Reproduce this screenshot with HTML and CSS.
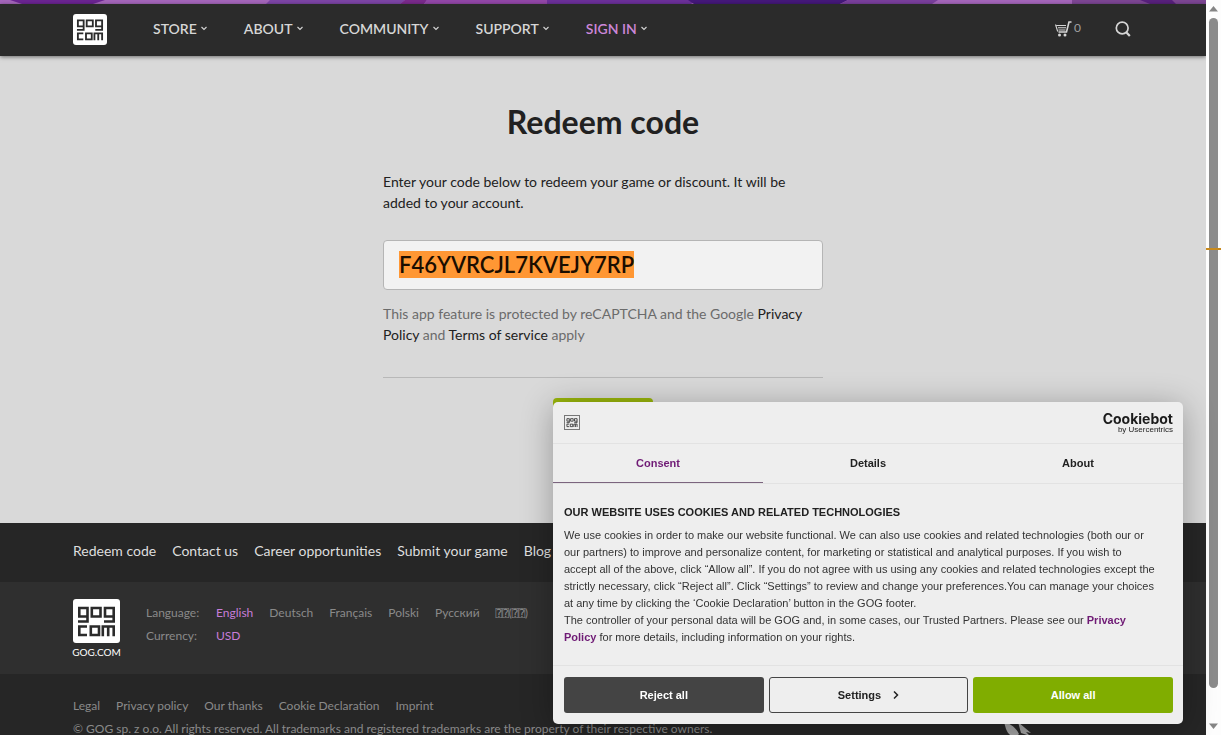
FILE: index.html
```html
<!DOCTYPE html>
<html lang="en">
<head>
    <meta charset="UTF-8">
    <meta name="viewport" content="width=device-width, initial-scale=1.0">
    <title>Redeem code - GOG.com</title>
    <link rel="stylesheet" href="styles.css">
</head>
<body>
    <svg class="defs" aria-hidden="true">
        <symbol id="gog-mark" viewBox="0 0 47 44">
            <g fill="none" stroke="currentColor" stroke-width="2.6">
                <path d="M14.500 17.500H6.300V9h8.200v13.500H5"/>
                <path d="M18.800 9h8.700v8.500h-8.700z"/>
                <path d="M40.700 17.500h-8.700V9h8.700v13.500H31"/>
                <path d="M14 27.500H6.300v8.500H14"/>
                <path d="M17.800 27.500h8.200v8.500h-8.200z"/>
                <path d="M29.800 37.300v-9.800h10.900v9.800M35.200 28v9.300"/>
            </g>
        </symbol>
        <symbol id="caret" viewBox="0 0 6 5">
            <path d="M.5 1l2.500 2.500L5.500 1" fill="none" stroke="currentColor" stroke-width="1.100"/>
        </symbol>
    </svg>

    <div class="page">
        <svg class="promo" viewBox="0 0 1206 4" preserveAspectRatio="none" aria-hidden="true">
            <rect width="1206" height="4" fill="#a566bb"/>
            <path d="M10 0h95l-12 4H22z" fill="#6b2492"/>
            <path d="M270 0h135l-5 4H266z" fill="#7d45a6"/>
            <path d="M405 0h22l-3 4h-24z" fill="#7a2a8c"/>
            <path d="M427 0h120v4H424z" fill="#9347a8"/>
            <path d="M547 0h150l-6 4H547z" fill="#6c309a"/>
            <path d="M688 0h160l-8 4H694z" fill="#45187a"/>
            <path d="M848 0h90l-6 4h-92z" fill="#7a3f9d"/>
            <path d="M1072 0h134v4h-134z" fill="#7d4694"/>
            <path d="M1140 0h32l4 4h-26z" fill="#58207c"/>
        </svg>

        <header class="topbar">
            <div class="wrap topbar-row">
                <a href="#" class="logo" aria-label="GOG.com"><svg width="34" height="31"><use href="#gog-mark"/></svg></a>
                <nav class="menu">
                    <a href="#">STORE <svg class="caret"><use href="#caret"/></svg></a>
                    <a href="#">ABOUT <svg class="caret"><use href="#caret"/></svg></a>
                    <a href="#">COMMUNITY <svg class="caret"><use href="#caret"/></svg></a>
                    <a href="#">SUPPORT <svg class="caret"><use href="#caret"/></svg></a>
                    <a href="#" class="sign-in">SIGN IN <svg class="caret"><use href="#caret"/></svg></a>
                </nav>
                <div class="tools">
                    <a href="#" class="cart" aria-label="Cart">
                        <svg width="17" height="16" viewBox="0 0 17 16" fill="none" stroke="currentColor">
                            <path d="M16.500 1h-2.500l-2.500 10H3.500" stroke-width="1.600"/>
                            <path d="M.5 3.500l2.200 7M1.500 4.500h9.500M3 6.800h8M3.500 9h7" stroke-width="1.100"/>
                            <circle cx="4.500" cy="14" r="1.500" fill="currentColor" stroke="none"/>
                            <circle cx="10" cy="14" r="1.500" fill="currentColor" stroke="none"/>
                        </svg>
                        <span>0</span>
                    </a>
                    <button type="button" class="search" aria-label="Search">
                        <svg width="16" height="16" viewBox="0 0 16 16" fill="none" stroke="currentColor">
                            <circle cx="7.200" cy="7" r="5.900" stroke-width="1.700"/>
                            <path d="M11 11l3.800 4" stroke-width="2.200"/>
                        </svg>
                    </button>
                </div>
            </div>
        </header>

        <main class="redeem">
            <form class="redeem-form">
                <h1>Redeem code</h1>
                <label for="code">Enter your code below to redeem your game or discount. It will be added to your account.</label>
                <input type="text" id="code" value="F46YVRCJL7KVEJY7RP" spellcheck="false" autocomplete="off">
                <p class="captcha">This app feature is protected by reCAPTCHA and the Google <a href="#">Privacy Policy</a> and <a href="#">Terms of service</a> apply</p>
                <div class="actions">
                    <button type="submit" class="continue">Continue</button>
                </div>
            </form>
        </main>

        <footer>
            <div class="footer-links">
                <nav class="wrap">
                    <a href="#">Redeem code</a>
                    <a href="#">Contact us</a>
                    <a href="#">Career opportunities</a>
                    <a href="#">Submit your game</a>
                    <a href="#">Blog</a>
                </nav>
            </div>
            <div class="footer-settings">
                <div class="wrap">
                    <a href="#" class="footer-logo">
                        <span class="logo"><svg width="47" height="44" aria-hidden="true"><use href="#gog-mark"/></svg></span>
                        <span>GOG.COM</span>
                    </a>
                    <dl>
                        <dt>Language:</dt>
                        <dd>
                            <a href="#" class="current">English</a>
                            <a href="#">Deutsch</a>
                            <a href="#">Français</a>
                            <a href="#">Polski</a>
                            <a href="#">Русский</a>
                            <a href="#" class="boxes">⍰⍰(⍰⍰)</a>
                        </dd>
                        <dt>Currency:</dt>
                        <dd><a href="#" class="current">USD</a></dd>
                    </dl>
                </div>
            </div>
            <div class="footer-legal">
                <div class="wrap">
                    <div>
                        <nav>
                            <a href="#">Legal</a>
                            <a href="#">Privacy policy</a>
                            <a href="#">Our thanks</a>
                            <a href="#">Cookie Declaration</a>
                            <a href="#">Imprint</a>
                        </nav>
                        <p>© GOG sp. z o.o. All rights reserved. All trademarks and registered trademarks are the property of their respective owners.</p>
                    </div>
                    <svg class="bird" width="28" height="36" viewBox="0 0 28 36" fill="#a3a3a3" aria-hidden="true">
                        <path d="M0 10c5 1 12 5 15 12l-3 3c-5 0-8-3-10-8zM14 10l13 11-5-1 4 4-9-3z"/>
                        <path d="M8 23l-3 8M13 23l-1 8" stroke="#a3a3a3" stroke-width="1.500"/>
                    </svg>
                </div>
            </div>
        </footer>
    </div>

    <div class="scrollbar" aria-hidden="true">
        <svg width="9" height="6" viewBox="0 0 9 6"><path d="M0 5.500L4.500 0 9 5.500z"/></svg>
        <div class="thumb"></div>
        <svg width="9" height="6" viewBox="0 0 9 6"><path d="M0 .5L4.500 6 9 .5z"/></svg>
        <div class="find-mark"></div>
    </div>

    <section class="consent" role="dialog" aria-label="Cookie consent">
        <div class="consent-head">
            <svg class="mini-logo" width="16" height="15" aria-hidden="true"><use href="#gog-mark"/></svg>
            <div class="cookiebot">
                <strong>Cookiebot</strong>
                <small>by Usercentrics</small>
            </div>
        </div>
        <div class="tabs" role="tablist">
            <button type="button" role="tab" aria-selected="true">Consent</button>
            <button type="button" role="tab" aria-selected="false">Details</button>
            <button type="button" role="tab" aria-selected="false">About</button>
        </div>
        <div class="consent-body">
            <h2>OUR WEBSITE USES COOKIES AND RELATED TECHNOLOGIES</h2>
            <p>We use cookies in order to make our website functional. We can also use cookies and related technologies (both our or<br>
            our partners) to improve and personalize content, for marketing or statistical and analytical purposes. If you wish to<br>
            accept all of the above, click “Allow all”. If you do not agree with us using any cookies and related technologies except the<br>
            strictly necessary, click “Reject all”. Click “Settings” to review and change your preferences.You can manage your choices<br>
            at any time by clicking the ‘Cookie Declaration’ button in the GOG footer.</p>
            <p>The controller of your personal data will be GOG and, in some cases, our Trusted Partners. Please see our <a href="#">Privacy<br>
            Policy</a> for more details, including information on your rights.</p>
        </div>
        <div class="consent-actions">
            <button type="button" class="reject">Reject all</button>
            <button type="button" class="settings">Settings
                <svg width="6" height="8" viewBox="0 0 6 8"><path d="M1 .5L4.500 4 1 7.500" fill="none" stroke="currentColor" stroke-width="1.500"/></svg>
            </button>
            <button type="button" class="allow">Allow all</button>
        </div>
    </section>

    <script src="main.js"></script>
</body>
</html>
```
FILE: styles.css
```css
* {
    box-sizing: border-box;
}
body {
    margin: 0;
    height: 100vh;
    overflow: hidden;
    display: grid;
    grid-template-columns: 1fr 15px;
    font-family: Lato, sans-serif;
    font-size: 14px;
    color: #212121;
    background: #fff;
}
h1, h2, p, dl, dd {
    margin: 0;
}
a {
    color: inherit;
    text-decoration: none;
}
button {
    font: inherit;
    color: inherit;
    background: none;
    border: 0;
    padding: 0;
    cursor: pointer;
}
svg {
    display: block;
    flex: none;
}
.defs {
    position: absolute;
    width: 0;
    height: 0;
}
.page {
    height: 100vh;
    overflow: hidden;
    background: #d9d9d9;
}
.wrap {
    max-width: 1060px;
    margin: 0 auto;
}

/* top bar */
.promo {
    width: 100%;
    height: 4px;
}
.topbar {
    height: 52px;
    background: #2b2b2b;
    color: #d6d6d6;
    box-shadow: 0 1px 4px rgba(0,0,0,0.5);
    position: relative;
}
.topbar-row {
    display: flex;
    align-items: center;
    height: 50px;
}
.logo {
    display: block;
    background: #fff;
    color: #2b2b2b;
    border-radius: 3px;
}
.menu {
    display: flex;
    gap: 37px;
    margin-left: 46px;
    padding-bottom: 2px;
    font-weight: 600;
}
.menu a {
    display: flex;
    align-items: center;
    gap: 4px;
}
.menu .sign-in {
    color: #cc87d8;
}
.caret {
    width: 6px;
    height: 5px;
}
.sign-in .caret {
    color: #d6d6d6;
}
.tools {
    display: flex;
    align-items: center;
    gap: 34px;
    margin-left: auto;
    padding-right: 2px;
}
.cart {
    display: flex;
    align-items: center;
    gap: 2px;
    font-size: 12px;
    line-height: 14px;
}
.cart span {
    color: #a0a0a0;
    padding-bottom: 2px;
}

/* redeem form */
.redeem {
    height: 467px;
    padding-top: 46px;
}
.redeem-form {
    width: 440px;
    margin: 0 auto;
    line-height: 21px;
}
h1 {
    font-size: 32px;
    line-height: 40px;
    font-weight: 700;
    text-align: center;
    margin-bottom: 29px;
}
.redeem-form label {
    display: block;
    margin-bottom: 27px;
}
.redeem-form input {
    display: block;
    width: 100%;
    height: 50px;
    padding: 0 15px 2px;
    border: 1px solid #b5b5b5;
    border-radius: 4px;
    background: #f2f2f2;
    font-family: inherit;
    font-size: 22px;
    line-height: 22px;
    font-weight: 600;
    color: #1a0d00;
    outline: none;
}
.redeem-form input::selection {
    background: rgba(255,150,50,0.99);
    color: #1a0d00;
}
.captcha {
    margin-top: 13px;
    padding-bottom: 32px;
    border-bottom: 1px solid #b8b8b8;
    color: #6b6b6b;
}
.captcha a {
    color: #212121;
}
.actions {
    display: flex;
    justify-content: center;
    padding-top: 20px;
}
.continue {
    width: 100px;
    height: 34px;
    border-radius: 4px;
    background: #98b40b;
    color: #fff;
}

/* footer */
.footer-links {
    background: #262626;
    color: #dedede;
    padding: 17px 0 21px;
    line-height: 21px;
}
.footer-links nav,
.footer-legal nav,
.footer-settings dd {
    display: flex;
    gap: 16px;
}
.footer-settings {
    background: #2f2f2f;
    color: #8a8a8a;
    font-size: 12px;
    padding: 17px 0 15px;
}
.footer-settings .wrap {
    display: flex;
    gap: 26px;
}
.footer-logo {
    width: 47px;
    height: 60px;
    display: flex;
    flex-direction: column;
    align-items: center;
    color: #fff;
    font-size: 10px;
    line-height: 18px;
}
.footer-settings dl {
    display: grid;
    grid-template-columns: 54px 1fr;
    column-gap: 16px;
    align-content: start;
    padding-top: 2px;
    line-height: 23px;
}
.current {
    color: #c77dd8;
}
.boxes {
    font-family: Lato, "DejaVu Sans Mono", monospace;
    font-size: 11px;
}
.footer-legal {
    background: #262626;
    color: #8a8a8a;
    font-size: 12px;
    line-height: 23px;
    padding: 20px 0;
}
.footer-legal .wrap {
    display: flex;
    justify-content: space-between;
}
.bird {
    margin: 18px 101px 0 0;
}

/* scrollbar */
.scrollbar {
    position: relative;
    display: flex;
    flex-direction: column;
    align-items: center;
    padding: 6px 0;
    background: #fdfdfd;
    fill: #858585;
}
.thumb {
    width: 9px;
    height: 670px;
    margin-top: 6px;
    margin-bottom: auto;
    border-radius: 5px;
    background: #8b8b8b;
}
.find-mark {
    position: absolute;
    left: 0;
    right: 0;
    top: 248px;
    height: 2px;
    background: #c98a1c;
}

/* cookie dialog */
.consent {
    position: fixed;
    right: 38px;
    bottom: 11px;
    width: 630px;
    background: #eee;
    border-radius: 5px;
    box-shadow: 0 4px 32px rgba(0,0,0,0.3);
    font-family: "Liberation Sans", Arial, sans-serif;
    font-size: 11px;
}
.consent-head {
    display: flex;
    align-items: center;
    justify-content: space-between;
    height: 42px;
    padding: 0 10px 0 11px;
    border-bottom: 1px solid #e2e2e2;
}
.mini-logo {
    border: 1px solid #777;
}
.cookiebot {
    display: flex;
    flex-direction: column;
    align-items: flex-end;
    color: #1c1c1c;
}
.cookiebot strong {
    font-family: Inter, sans-serif;
    font-size: 14px;
    font-weight: 700;
    line-height: 14px;
}
.cookiebot small {
    font-size: 8px;
    line-height: 8px;
}
.tabs {
    display: grid;
    grid-template-columns: repeat(3, 1fr);
    border-bottom: 1px solid #e2e2e2;
}
.tabs button {
    height: 39px;
    border-bottom: 1px solid transparent;
    font-weight: bold;
}
.tabs [aria-selected="true"] {
    color: #6f1a75;
    border-bottom-color: #7b647e;
}
.consent-body {
    padding: 20px 11px 19px;
    border-bottom: 1px solid #e2e2e2;
    line-height: 17px;
    white-space: nowrap;
}
.consent-body h2 {
    font-size: 11px;
    line-height: 17px;
    margin-bottom: 6px;
}
.consent-body p {
    color: #333;
}
.consent-body a {
    font-weight: bold;
    color: #6f1a75;
}
.consent-actions {
    display: grid;
    grid-template-columns: repeat(3, 1fr);
    gap: 5px;
    padding: 11px 10px 11px 11px;
}
.consent-actions button {
    display: flex;
    align-items: center;
    justify-content: center;
    gap: 12px;
    height: 36px;
    border-radius: 3px;
    font-weight: bold;
}
.consent-actions .reject {
    background: #444;
    color: #fff;
}
.consent-actions .settings {
    border: 1px solid #444;
}
.consent-actions .allow {
    background: #80ad00;
    color: #fff;
}
```
FILE: main.js
```js
// preselect the code so it can be replaced right away
const code = document.getElementById('code');
code.focus();
code.select();
```
